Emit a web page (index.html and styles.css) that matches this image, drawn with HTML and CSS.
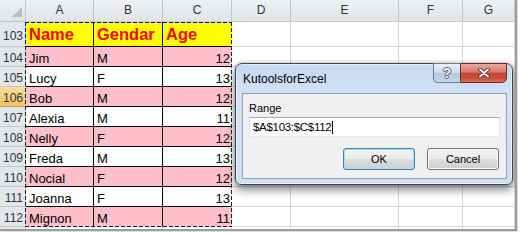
FILE: index.html
```html
<!DOCTYPE html>
<html>
<head>
<meta charset="utf-8">
<link rel="stylesheet" href="styles.css">
</head>
<body>
<div class="sheet">
  <div class="grid">
    <div class="corner"><span class="tri"></span></div>
    <div class="ch">A</div><div class="ch">B</div><div class="ch">C</div><div class="ch">D</div><div class="ch">E</div><div class="ch">F</div><div class="ch">G</div>

    <div class="rh r1">103</div><div class="c yl r1">Name</div><div class="c yl r1">Gendar</div><div class="c yl r1 lc">Age</div><div class="g"></div><div class="g"></div><div class="g"></div><div class="g"></div>

    <div class="rh">104</div><div class="c pk">Jim</div><div class="c pk">M</div><div class="c pk num lc">12</div><div class="g"></div><div class="g"></div><div class="g"></div><div class="g"></div>

    <div class="rh">105</div><div class="c">Lucy</div><div class="c">F</div><div class="c num lc">13</div><div class="g"></div><div class="g"></div><div class="g"></div><div class="g"></div>

    <div class="rh act">106</div><div class="c pk">Bob</div><div class="c pk">M</div><div class="c pk num lc">12</div><div class="g"></div><div class="g"></div><div class="g"></div><div class="g"></div>

    <div class="rh">107</div><div class="c">Alexia</div><div class="c">M</div><div class="c num lc">11</div><div class="g"></div><div class="g"></div><div class="g"></div><div class="g"></div>

    <div class="rh">108</div><div class="c pk">Nelly</div><div class="c pk">F</div><div class="c pk num lc">12</div><div class="g"></div><div class="g"></div><div class="g"></div><div class="g"></div>

    <div class="rh">109</div><div class="c">Freda</div><div class="c">M</div><div class="c num lc">13</div><div class="g"></div><div class="g"></div><div class="g"></div><div class="g"></div>

    <div class="rh">110</div><div class="c pk">Nocial</div><div class="c pk">F</div><div class="c pk num lc">12</div><div class="g"></div><div class="g"></div><div class="g"></div><div class="g"></div>

    <div class="rh">111</div><div class="c">Joanna</div><div class="c">F</div><div class="c num lc">13</div><div class="g"></div><div class="g"></div><div class="g"></div><div class="g"></div>

    <div class="rh">112</div><div class="c pk lr">Mignon</div><div class="c pk lr">M</div><div class="c pk num lc lr">11</div><div class="g"></div><div class="g"></div><div class="g"></div><div class="g"></div>

    <div class="rh"></div><div class="g"></div><div class="g"></div><div class="g"></div><div class="g"></div><div class="g"></div><div class="g"></div><div class="g"></div>
  </div>

  <div class="ants"></div>

  <div class="dialog">
    <div class="titlebar">KutoolsforExcel</div>
    <div class="caption-btns">
      <div class="cbtn help">?</div>
      <div class="cbtn close">
        <svg width="12" height="10" viewBox="0 0 12 10">
          <path d="M2 1.5 L10 8.5 M10 1.5 L2 8.5" stroke="#4a1a12" stroke-width="3.6" stroke-linecap="round" fill="none"/>
          <path d="M2 1.5 L10 8.5 M10 1.5 L2 8.5" stroke="#ffffff" stroke-width="2" stroke-linecap="round" fill="none"/>
        </svg>
      </div>
    </div>
    <div class="panel">
      <div class="label">Range</div>
      <div class="input"><span>$A$103:$C$112</span><span class="caret"></span></div>
      <div class="buttons">
        <div class="btn ok">OK</div>
        <div class="btn">Cancel</div>
      </div>
    </div>
  </div>
</div>
</body>
</html>
```

FILE: styles.css
```css
html, body {
  margin: 0;
  padding: 0;
  background: #ffffff;
}

body {
  font-family: "Liberation Sans", Arial, sans-serif;
  width: 520px;
  height: 233px;
  overflow: hidden;
}

.sheet {
  position: relative;
  width: 515px;
  height: 229px;
  border-right: 2px solid #9c9c9c;
  border-bottom: 2px solid #9c9c9c;
  box-shadow: 1px 1px 0 #dedede;
  overflow: hidden;
  background: #ffffff;
}

.grid {
  display: grid;
  grid-template-columns: 26px 68px 69px 69px 59px 108px 64px 1fr;
  grid-template-rows: 22px 25px repeat(11, 20px);
}

.grid > div {
  box-sizing: border-box;
}

.corner {
  background: linear-gradient(#eef0f2, #e2e5e8);
  border-right: 1px solid #c3c7cc;
  border-bottom: 1px solid #c3c7cc;
  display: flex;
  justify-content: flex-end;
  align-items: flex-end;
  padding: 0 3px 4px 0;
}

.tri {
  width: 10px;
  height: 10px;
  background: #b9bdc3;
  clip-path: polygon(100% 0, 100% 100%, 0 100%);
}

.ch {
  background: linear-gradient(#eef0f2, #e2e5e8);
  border-right: 1px solid #c3c7cc;
  border-bottom: 1px solid #c3c7cc;
  font-size: 12px;
  line-height: 15px;
  color: #2c3440;
  display: flex;
  align-items: center;
  justify-content: center;
}

.rh {
  background: #e4e7ea;
  border-right: 1px solid #c3c7cc;
  border-bottom: 1px solid #c3c7cc;
  font-size: 12px;
  line-height: 15px;
  color: #2c3440;
  display: flex;
  align-items: flex-end;
  justify-content: flex-end;
  padding-right: 2px;
}

.rh.act {
  background: linear-gradient(#f9dc9c, #f1c35f);
  border-bottom-color: #c9a24a;
}

.c {
  border-right: 1px solid #000000;
  border-bottom: 1px solid #000000;
  font-size: 13px;
  line-height: 15px;
  color: #000000;
  display: flex;
  align-items: flex-end;
  padding-left: 3px;
  white-space: nowrap;
}

.c.num {
  justify-content: flex-end;
  padding-left: 0;
  padding-right: 1px;
}

.pk {
  background: #ffc0cb;
}

.yl {
  background: #ffff00;
  color: #ff0000;
  font-weight: bold;
  font-size: 16.5px;
  line-height: 19px;
}

.r1 {
  padding-bottom: 2px;
}

.c.lc {
  border-right-color: transparent;
}

.c.lr {
  border-bottom-color: transparent;
}

.g {
  border-right: 1px solid #d6d6d6;
  border-bottom: 1px solid #d6d6d6;
}

/* marching ants around the copied range */
.ants {
  position: absolute;
  left: 25px;
  top: 22px;
  width: 207px;
  height: 205px;
  pointer-events: none;
  background:
    repeating-linear-gradient(90deg, #0000ff 0 4px, transparent 4px 6px) 0 0 / 100% 1px no-repeat,
    repeating-linear-gradient(90deg, #0b2a1e 0 4px, transparent 4px 6px) 0 100% / 100% 1px no-repeat,
    repeating-linear-gradient(180deg, #0000ff 0 4px, transparent 4px 6px) 0 0 / 1px 24px no-repeat,
    repeating-linear-gradient(180deg, #0b2a1e 0 4px, transparent 4px 6px) 0 24px / 1px 181px no-repeat,
    repeating-linear-gradient(180deg, #0b2a1e 0 4px, transparent 4px 6px) 100% 0 / 1px 100% no-repeat;
}

/* dialog */
.dialog {
  position: absolute;
  left: 235px;
  top: 63px;
  width: 278px;
  height: 122px;
  box-sizing: border-box;
  border: 1px solid #3d4656;
  border-radius: 7px 7px 6px 6px;
  background: linear-gradient(180deg, #c3d8f0 0%, #d4e4f6 30%, #cfe0f4 100%);
  box-shadow: inset 0 0 0 1px rgba(255, 255, 255, 0.55), 0 5px 10px rgba(0, 0, 0, 0.45), 0 0 4px rgba(0, 0, 0, 0.25);
  display: flex;
  flex-direction: column;
}

.titlebar {
  height: 29px;
  box-sizing: border-box;
  padding: 8px 0 0 7px;
  font-size: 12px;
  line-height: 14px;
  color: #000000;
}

.caption-btns {
  position: absolute;
  top: -1px;
  right: 5px;
  display: flex;
  height: 20px;
}

.cbtn {
  box-sizing: border-box;
  height: 20px;
  display: flex;
  align-items: center;
  justify-content: center;
}

.help {
  width: 27px;
  border: 1px solid #6c7d92;
  border-right: none;
  border-radius: 0 0 0 5px;
  background: linear-gradient(180deg, #e6eef8 0%, #cfdcec 48%, #b5c7dd 52%, #c6d6e9 100%);
  font-weight: bold;
  font-size: 14px;
  line-height: 14px;
  color: #f4f6f9;
  text-shadow: 1px 0 0 #59616c, -1px 0 0 #59616c, 0 1px 0 #59616c, 0 -1px 0 #59616c;
}

.close {
  width: 47px;
  border: 1px solid #6e2b22;
  border-radius: 0 0 5px 0;
  background: linear-gradient(180deg, #e9a99d 0%, #d9786a 45%, #c44532 52%, #c9503e 80%, #d8725f 100%);
}

.panel {
  margin: 0 5px 0 6px;
  height: 86px;
  box-sizing: border-box;
  border: 1px solid #8e9fb6;
  background: #f0f0f0;
  padding: 8px 6px 0 6px;
  display: flex;
  flex-direction: column;
}

.label {
  font-size: 11px;
  line-height: 13px;
  color: #000000;
}

.input {
  margin-top: 2px;
  height: 20px;
  box-sizing: border-box;
  border: 1px solid #abadb3;
  border-color: #abadb3 #dbdfe6 #e3e9ef #e2e3ea;
  background: #ffffff;
  padding-left: 3px;
  display: flex;
  align-items: center;
  font-size: 11.5px;
  line-height: 13px;
  letter-spacing: -0.3px;
  color: #000000;
}

.caret {
  width: 1px;
  height: 13px;
  background: #000000;
  margin-left: 1px;
}

.buttons {
  margin-top: 11px;
  display: flex;
  justify-content: flex-end;
  gap: 12px;
  padding-right: 1px;
}

.btn {
  width: 72px;
  height: 22px;
  box-sizing: border-box;
  border: 1px solid #707070;
  border-radius: 3px;
  background: linear-gradient(180deg, #f2f2f2 0%, #ebebeb 50%, #dddddd 51%, #cfcfcf 100%);
  box-shadow: inset 0 0 0 1px #fbfbfb;
  font-size: 11px;
  line-height: 13px;
  color: #000000;
  display: flex;
  align-items: center;
  justify-content: center;
}

.btn.ok {
  border-color: #3c7fb1;
  box-shadow: inset 0 0 0 1px #a9dcf6;
}
```
